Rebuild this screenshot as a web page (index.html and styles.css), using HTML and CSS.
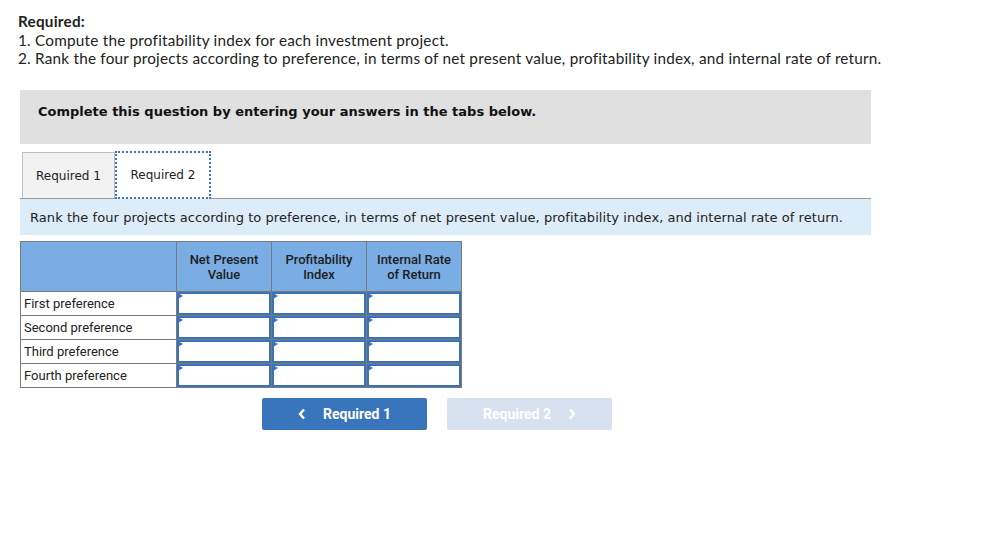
FILE: index.html
```html
<!DOCTYPE html>
<html>
<head>
<meta charset="utf-8">
<link rel="stylesheet" href="styles.css">
</head>
<body>
<div class="page">
  <div class="req">
    <div class="req-title">Required:</div>
    <div>1. Compute the profitability index for each investment project.</div>
    <div>2. Rank the four projects according to preference, in terms of net present value, profitability index, and internal rate of return.</div>
  </div>
  <div class="banner">Complete this question by entering your answers in the tabs below.</div>
  <div class="tabs">
    <div class="tab">Required 1</div>
    <div class="tab active">Required 2</div>
  </div>
  <div class="instr">Rank the four projects according to preference, in terms of net present value, profitability index, and internal rate of return.</div>
  <table class="grid">
    <thead>
      <tr>
        <th class="lbl"></th>
        <th>Net Present<br>Value</th>
        <th>Profitability<br>Index</th>
        <th>Internal Rate<br>of Return</th>
      </tr>
    </thead>
    <tbody>
      <tr><td class="lbl">First preference</td><td><div class="inp"></div></td><td><div class="inp"></div></td><td><div class="inp"></div></td></tr>
      <tr><td class="lbl">Second preference</td><td><div class="inp"></div></td><td><div class="inp"></div></td><td><div class="inp"></div></td></tr>
      <tr><td class="lbl">Third preference</td><td><div class="inp"></div></td><td><div class="inp"></div></td><td><div class="inp"></div></td></tr>
      <tr><td class="lbl">Fourth preference</td><td><div class="inp"></div></td><td><div class="inp"></div></td><td><div class="inp"></div></td></tr>
    </tbody>
  </table>
  <div class="navs">
    <div class="btn prev"><svg class="chev" width="8" height="12" viewBox="0 0 8 12"><path d="M6 1.5 L2 6 L6 10.5" fill="none" stroke="#fff" stroke-width="2.4"/></svg>Required 1</div>
    <div class="btn next">Required 2<svg class="chev" width="8" height="12" viewBox="0 0 8 12"><path d="M2 1.5 L6 6 L2 10.5" fill="none" stroke="#fff" stroke-width="2.4"/></svg></div>
  </div>
</div>
</body>
</html>
```

FILE: styles.css
```css
html, body { margin: 0; padding: 0; background: #fff; }
.page { padding: 12px 20px 0 18px; width: 853px; }
.req { font-family: Lato, "Open Sans", sans-serif; font-size: 15.3px; letter-spacing: 0.22px; line-height: 18px; color: #222; white-space: nowrap; }
.req-title { font-weight: bold; margin-bottom: 1px; }
.banner {
  margin: 23px 0 0 2px;
  background: #e0e0e0;
  height: 54px;
  box-sizing: border-box;
  padding: 14px 0 0 18px;
  line-height: 16px;
  font-family: "DejaVu Sans", Verdana, sans-serif;
  font-weight: bold; font-size: 13px; color: #111;
}
.tabs {
  margin: 7px 0 0 2px;
  display: flex;
  padding-left: 2px;
  border-bottom: 1px solid #999;
  height: 47px;
  align-items: flex-end;
}
.tab {
  box-sizing: border-box;
  height: 46px;
  width: 93px;
  display: flex; align-items: center; justify-content: center;
  font-family: "DejaVu Sans", Verdana, sans-serif; font-size: 12px; color: #222;
  background: #f2f2f2;
  border: 1px solid #c0c0c0; border-bottom: none;
}
.tab.active {
  background: #fff;
  width: 96px;
  border: 2px dotted #3a76c0;
  margin-bottom: -1px;
  height: 48px;
}
.instr {
  margin-left: 2px;
  background: #dcecf9;
  height: 36px;
  display: flex; align-items: center;
  padding-left: 10px;
  font-family: "DejaVu Sans", Verdana, sans-serif; font-size: 13px; color: #222;
  letter-spacing: 0.06px;
}
.grid {
  margin: 6px 0 0 2px;
  border-collapse: collapse;
  font-family: Roboto, "Liberation Sans", sans-serif; font-size: 13px; color: #222;
}
.grid th, .grid td { border: 1px solid #7a7a7a; padding: 0; }
.grid th {
  background: #7aade3;
  height: 49px;
  width: 94px;
  font-weight: 500;
  line-height: 15px;
  color: #1d1d1d;
  vertical-align: middle;
}
.grid th.lbl { width: 155px; }
.grid td { height: 23px; }
.grid td.lbl { padding: 0 3px; line-height: 23px; text-align: left; }
.inp {
  position: relative;
  box-sizing: border-box;
  height: 23px;
  border: 2px solid #3b73b9;
  background: #fff;
}
.inp::before {
  content: "";
  position: absolute; left: -1px; top: -1px;
  border-left: 5px solid #3b73b9;
  border-top: 3px solid transparent;
  border-bottom: 3px solid transparent;
}
.navs { display: flex; gap: 20px; margin: 10px 0 0 244px; }
.btn {
  width: 165px; height: 32px; border-radius: 2px;
  display: flex; align-items: center; justify-content: center;
  font-family: Roboto, "Liberation Sans", sans-serif; font-weight: bold; font-size: 14px; color: #fff;
}
.btn.prev { background: #3875ba; }
.btn.next { background: #d6e2f0; }
.prev .chev { margin-right: 17px; }
.next .chev { margin-left: 17px; }
```
